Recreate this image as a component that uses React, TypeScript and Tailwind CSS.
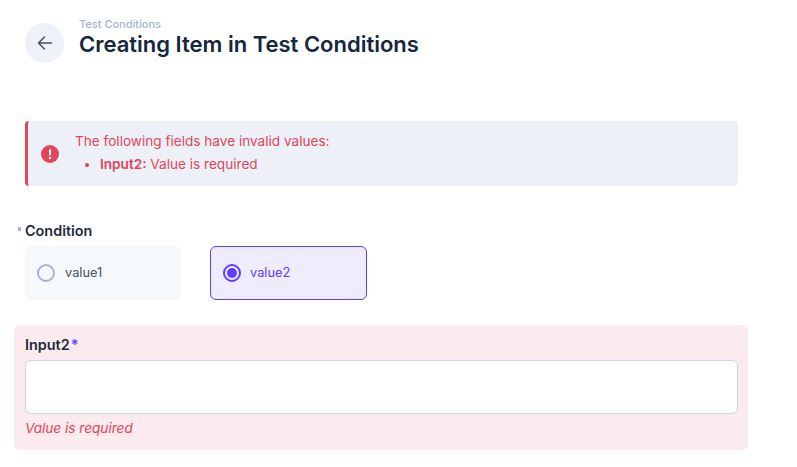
import React from "react";

export default function App() {
  return (
    <div className="w-[797px] h-[467px] overflow-hidden bg-white pl-[25px] pt-[18px] font-['Inter',sans-serif] text-[#16263d]">
      <div className="flex items-start gap-[15px] h-[103px] pt-[5px]">
        <button className="w-[39px] h-[40px] rounded-full bg-[#eef1f8] flex items-center justify-center shrink-0">
          <svg width="16" height="16" viewBox="0 0 16 16" fill="none" stroke="#475069" strokeWidth="1.5" strokeLinecap="round" strokeLinejoin="round">
            <path d="M14.5 8H1.5M7.5 2L1.5 8l6 6" />
          </svg>
        </button>
        <div className="-mt-[5px]">
          <div className="text-[11px] leading-[13px] font-medium text-[#a3b5d0]">Test Conditions</div>
          <h1 className="text-[22px] leading-[26px] font-semibold text-[#16263d]">Creating Item in Test Conditions</h1>
        </div>
      </div>

      <div className="w-[713px] h-[65px] rounded-[4px] border-l-[3px] border-[#e2445c] bg-[#edf0f7] flex items-center pl-[13px] text-[#e2445c]">
        <svg width="18" height="18" viewBox="0 0 18 18" className="shrink-0">
          <circle cx="9" cy="9" r="9" fill="#e2445c" />
          <rect x="8" y="4" width="2" height="6.5" rx="1" fill="#ffffff" />
          <circle cx="9" cy="13" r="1.2" fill="#ffffff" />
        </svg>
        <div className="ml-[16px] -mt-[1px] text-[13.6px] leading-[23px]">
          <div>The following fields have invalid values:</div>
          <ul className="list-disc pl-[25px]">
            <li><span className="font-semibold">Input2:</span> Value is required</li>
          </ul>
        </div>
      </div>

      <div className="relative mt-[35px] text-[14.4px] leading-[20px] font-semibold text-[#222b3c]">
        <span className="absolute -left-[7px] top-[6px] w-[3px] h-[4px] bg-[#a3b5d0]"></span>
        Condition
      </div>
      <div className="flex gap-[29px] mt-[5px]">
        <div className="w-[156px] h-[54px] rounded-[6px] border border-[#f4f6f9] bg-[#f6f9fc] flex items-center pl-[11px]">
          <span className="w-[18px] h-[18px] rounded-full border-2 border-[#a3b5d0] shrink-0"></span>
          <span className="ml-[10px] text-[12.8px] text-[#4a4f5c]">value1</span>
        </div>
        <div className="w-[157px] h-[54px] rounded-[6px] border border-[#5f3dff] bg-[#efecfe] flex items-center pl-[12px]">
          <span className="w-[18px] h-[18px] rounded-full border-2 border-[#5f3dff] shrink-0 flex items-center justify-center">
            <span className="w-[10px] h-[10px] rounded-full bg-[#5f3dff]"></span>
          </span>
          <span className="ml-[9px] text-[12.8px] text-[#5f3dff]">value2</span>
        </div>
      </div>

      <div className="-ml-[11px] mt-[25px] w-[734px] h-[125px] rounded-[6px] bg-[#fbeaee] pl-[11px] pr-[10px] pt-[10px]">
        <div className="text-[14.4px] leading-[20px] font-semibold text-[#222b3c]">
          Input2<span className="text-[#5f3dff] ml-[1px]">*</span>
        </div>
        <input className="block mt-[5px] w-full h-[54px] rounded-[6px] bg-white border border-[#ccd3e2] outline-none" />
        <div className="mt-[5px] text-[13.6px] leading-[18px] italic text-[#e2445c]">Value is required</div>
      </div>
    </div>
  );
}
